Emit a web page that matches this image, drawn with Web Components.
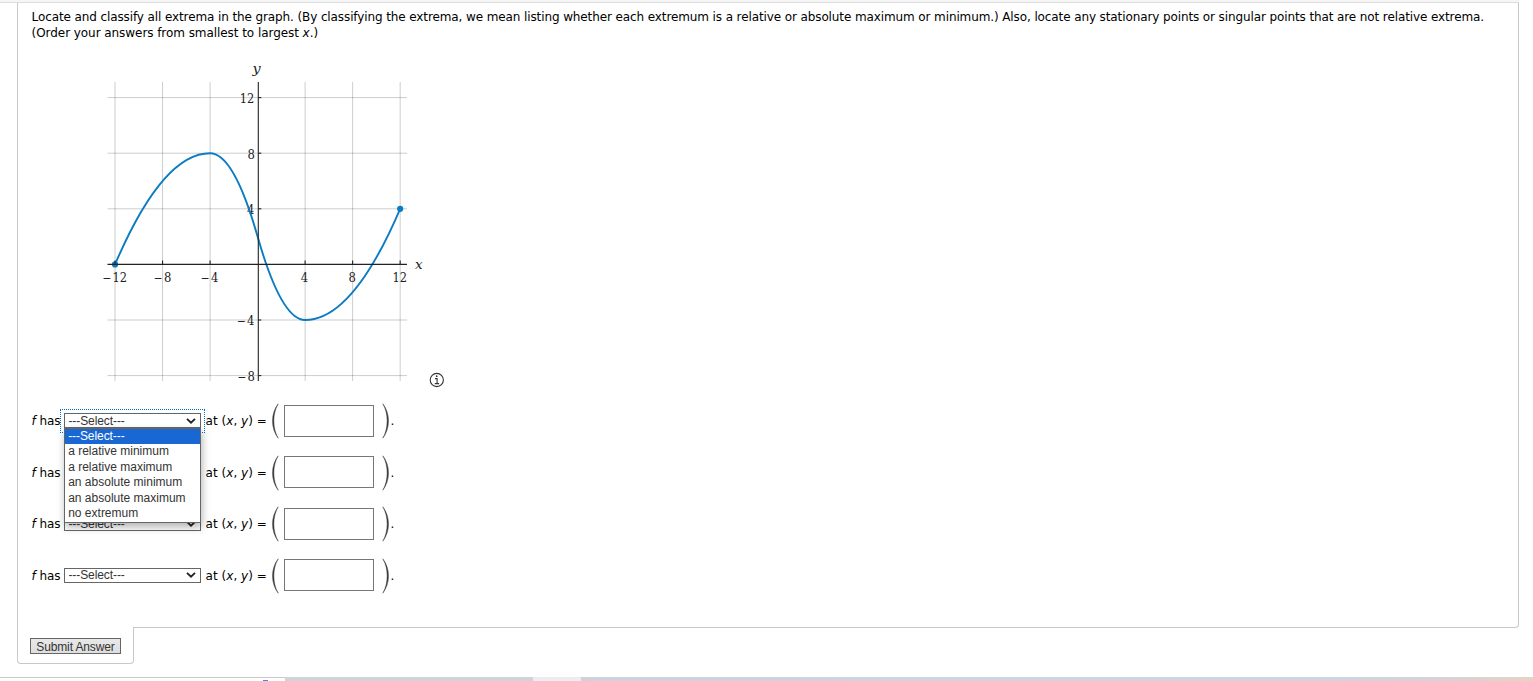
<!DOCTYPE html>
<html lang="en">
<head>
<meta charset="utf-8">
<title>Extrema</title>
<style>
  html, body {
    margin: 0;
    height: 681px;
    overflow: hidden;
    background: #fff;
  }
  body {
    font-family: "DejaVu Sans", Verdana, sans-serif;
    font-size: 12px;
    color: #000;
  }
</style>
</head>
<body>
<question-page></question-page>

<script>
class QuestionPrompt extends HTMLElement {
  constructor() {
    super();
    this.attachShadow({ mode: 'open' }).innerHTML = `
    <style>
      :host { display: block; padding-left: .6px; line-height: 16px; white-space: nowrap; }
      .first { letter-spacing: -.108px; }
      .second { letter-spacing: -.06px; }
    </style>
    <div class="first"><slot name="first"></slot></div>
    <div class="second"><slot name="second"></slot></div>`;
  }
}
customElements.define('question-prompt', QuestionPrompt);

class FunctionGraph extends HTMLElement {
  constructor() {
    super();
    this.attachShadow({ mode: 'open' }).innerHTML = `
    <style>
      :host { display: block; width: 350px; height: 340px; }
      svg { display: block; }
      .grid { stroke: #000; stroke-opacity: .2; stroke-width: 1; }
      .axis { stroke: #222; stroke-width: 1.1; fill: none; }
      text { font-family: "DejaVu Serif", serif; font-size: 12px; fill: #222; }
      .name { font-style: italic; font-size: 12.5px; }
      .curve { fill: none; stroke: #0b7bc2; stroke-width: 1.9; }
    </style>
    <svg width="350" height="340" viewBox="100 55 350 340">${this.draw()}</svg>`;
  }

  px(x) {
    return +(257.6 + x * 11.88).toFixed(2);
  }

  py(y) {
    return +(264.4 - y * 13.9).toFixed(2);
  }

  label(text, right, y, width) {
    return `<text x="${right - width}" y="${y}" textLength="${width}" lengthAdjust="spacingAndGlyphs">${text}</text>`;
  }

  draw() {
    const p = (x, y) => `${this.px(x)} ${this.py(y)}`;
    let out = '';
    [-12, -8, -4, 4, 8, 12].forEach((x) => {
      out += `<path class="grid" d="M${this.px(x)} 82V381"/>`;
    });
    [12, 8, 4, -4, -8].forEach((y) => {
      out += `<path class="grid" d="M107.5 ${this.py(y)}H407"/>`;
    });
    out += this.label('12', 254.3, 102.8, 14.5) + this.label('8', 254.8, 158.6, 7.4);
    out += this.label('4', 254.3, 214.2, 7.4);
    out += this.label('−', 245.8, 325, 9) + this.label('4', 254.3, 325, 7.4);
    out += this.label('−', 246.2, 380.8, 9) + this.label('8', 254.8, 380.8, 7.4);
    out += this.label('−', 111.3, 282, 9) + this.label('12', 127, 282, 14.5);
    out += this.label('−', 162.6, 282, 9) + this.label('8', 171.3, 282, 7.4);
    out += this.label('−', 209.6, 282, 9) + this.label('4', 218.3, 282, 7.4);
    out += this.label('4', 308.2, 282, 7.4);
    out += this.label('8', 355.8, 282, 7.4) + this.label('12', 407, 282, 14.5);
    out += `<text class="name" x="252.4" y="73" textLength="8.2" lengthAdjust="spacingAndGlyphs">y</text>`;
    out += `<text class="name" x="415" y="269" textLength="7.6" lengthAdjust="spacingAndGlyphs">x</text>`;
    out += `<path class="curve" d="M${p(-12, 0)}Q${p(-8, 8)} ${p(-4, 8)}Q${p(-2, 8)} ${p(0, 2)}Q${p(2, -4)} ${p(4, -4)}Q${p(8, -4)} ${p(12, 4)}"/>`;
    out += `<circle cx="${this.px(-12)}" cy="${this.py(0)}" r="3.1" fill="#0b7bc2"/>`;
    out += `<circle cx="${this.px(12)}" cy="${this.py(4)}" r="3.1" fill="#0b7bc2"/>`;
    out += `<path class="axis" d="M107.5 264.4H407M258.3 82V381"/>`;
    [-12, -8, -4, 4, 8, 12].forEach((x) => {
      out += `<path class="axis" d="M${this.px(x)} 260.5V264.4"/>`;
    });
    [12, 8, 4, -4, -8].forEach((y) => {
      out += `<path class="axis" d="M258.3 ${this.py(y)}h3"/>`;
    });
    // info icon
    out += `<g fill="none" stroke="#333"><circle cx="436.8" cy="380" r="6.6" stroke-width="1.1"/>
      <path d="M435 378.6h2.1v5M434.8 383.6h4.3" stroke-width="1.1"/></g>
      <circle cx="436.7" cy="376.2" r=".9" fill="#333"/>`;
    return out;
  }
}
customElements.define('function-graph', FunctionGraph);

class SelectBox extends HTMLElement {
  constructor() {
    super();
    this.attachShadow({ mode: 'open' }).innerHTML = `
    <style>
      :host {
        display: block;
        position: relative;
        width: 137px;
        height: 16px;
        font: 12px/14px "Liberation Sans", Arial, sans-serif;
        letter-spacing: -.08px;
        color: #333;
      }
      .box {
        box-sizing: border-box;
        display: flex;
        justify-content: space-between;
        align-items: center;
        height: 15px;
        padding: 0 4px 0 3.4px;
        border: 1px solid #666;
        background: #fff;
      }
      .focus {
        display: none;
        position: absolute;
        inset: -4px -4px -4px -4px;
        border: 1px dotted #0070c0;
      }
      .list {
        display: none;
        position: absolute;
        z-index: 2;
        top: 15px;
        left: 0;
        width: 135px;
        border: 1px solid #666;
        background: #fff;
        box-shadow: 1px 4px 8px rgba(0, 0, 0, .3);
        color: #333;
      }
      .list div { height: 15.45px; line-height: 15px; padding-left: 3.2px; letter-spacing: 0; }
      .list div:first-child { background: #1967d2; color: #fff; letter-spacing: -.08px; }
      :host([open]) .focus, :host([open]) .list { display: block; }
    </style>
    <div class="box"><span>${this.hasAttribute('empty') ? '' : '---Select---'}</span>
      <svg width="10" height="6" viewBox="0 0 10 6"><path d="M1 .9L5 4.6L9 .9" fill="none" stroke="#222" stroke-width="1.9"/></svg>
    </div>
    <div class="focus"></div>
    <div class="list">${this.createOptions()}</div>`;
  }

  createOptions() {
    if (!this.hasAttribute('open')) {
      return '';
    }
    return ['---Select---', 'a relative minimum', 'a relative maximum', 'an absolute minimum', 'an absolute maximum', 'no extremum']
      .map((option) => `<div>${option}</div>`).join('');
  }
}
customElements.define('select-box', SelectBox);

class AnswerRow extends HTMLElement {
  constructor() {
    super();
    const state = this.hasAttribute('open') ? 'open' : (this.hasAttribute('empty') ? 'empty' : '');
    this.attachShadow({ mode: 'open' }).innerHTML = `
    <style>
      :host {
        display: grid;
        grid-template-columns: 34px 140px 66px 13px 90px 8px 8.5px 8px;
        align-items: center;
        height: 34px;
        line-height: 16px;
        white-space: nowrap;
      }
      .has { padding-left: .6px; letter-spacing: -.1px; }
      select-box { margin-left: -1px; }
      .at { padding-left: .5px; letter-spacing: .04px; }
      .input { box-sizing: border-box; height: 32px; width: 90px; border: 1px solid #767676; margin-top: -1px; }
      svg { display: block; }
      .close { grid-column: 7; }
    </style>
    <span class="has"><i>f</i> has</span>
    <select-box ${state}></select-box>
    <span class="at">at (<i>x</i>, <i>y</i>) =</span>
    <svg width="9" height="36" viewBox="0 0 9 36"><path d="M7.2 .8C-.4 10.5 -.4 25.5 7.2 35.2C1.4 25.5 1.4 10.5 7.2 .8Z" fill="#333" stroke="#444" stroke-width=".5"/></svg>
    <div class="input"></div>
    <svg class="close" width="9" height="36" viewBox="0 0 9 36"><path d="M.8 .8C8.4 10.5 8.4 25.5 .8 35.2C6.6 25.5 6.6 10.5 .8 .8Z" fill="#333" stroke="#444" stroke-width=".5"/></svg>
    <span>.</span>`;
  }
}
customElements.define('answer-row', AnswerRow);

class SubmitButton extends HTMLElement {
  constructor() {
    super();
    this.attachShadow({ mode: 'open' }).innerHTML = `
    <style>
      :host {
        display: block;
        box-sizing: border-box;
        width: 91px;
        height: 16px;
        border: 1px solid #666;
        background: linear-gradient(#e8e8e8, #dedede);
        font: 12px/16px "Liberation Sans", Arial, sans-serif;
        letter-spacing: -.12px;
        color: #333;
        text-align: center;
        white-space: nowrap;
      }
    </style>
    <slot></slot>`;
  }
}
customElements.define('submit-button', SubmitButton);

class QuestionPage extends HTMLElement {
  constructor() {
    super();
    this.attachShadow({ mode: 'open' }).innerHTML = `
    <style>
      :host { display: flex; flex-direction: column; width: 1533px; height: 681px; }
      .top { height: 2px; width: 1519px; background: #f5f5f5; border-bottom: 1px solid #ddd; }
      .panel {
        box-sizing: border-box;
        width: 1502px;
        height: 625px;
        margin-left: 17px;
        border: solid #c8c8c8;
        border-width: 0 1px 1px;
        border-radius: 0 0 4px 0;
        padding: 6px 0 0 13px;
      }
      function-graph { margin: 14px 0 0 69px; }
      .rows { display: flex; flex-direction: column; gap: 17.67px; margin-top: 8px; }
      .tab {
        box-sizing: border-box;
        width: 117px;
        height: 37px;
        margin: -1px 0 0 17px;
        padding: 11px 0 0 12px;
        border: solid #c8c8c8;
        border-width: 0 1px 1px;
        border-radius: 0 0 4px 4px;
        background: #fff;
      }
      .bottom {
        display: flex;
        height: 4px;
        margin-top: 13px;
      }
      .bar { box-sizing: border-box; width: 285px; border-top: 1px solid #c8c8c8; padding: 2px 0 0 263px; }
      .mark { width: 5px; height: 1px; background: #4c83e8; }
      .shelf { width: 248px; background: #d2d3d6; }
      .active { width: 48px; background: #ededef; }
      .rest { flex: 1; background: linear-gradient(90deg, #d1d1db, #d0d4df 75%, #d5d3d8 90%, #e6d3c5); }
    </style>
    <div class="top"></div>
    <div class="panel">
      <question-prompt>
        <span slot="first">Locate and classify all extrema in the graph. (By classifying the extrema, we mean listing whether each extremum is a relative or absolute maximum or minimum.) Also, locate any stationary points or singular points that are not relative extrema.</span>
        <span slot="second">(Order your answers from smallest to largest <i>x</i>.)</span>
      </question-prompt>
      <function-graph></function-graph>
      <div class="rows">
        <answer-row open></answer-row>
        <answer-row empty></answer-row>
        <answer-row></answer-row>
        <answer-row></answer-row>
      </div>
    </div>
    <div class="tab"><submit-button>Submit Answer</submit-button></div>
    <div class="bottom">
      <div class="bar"><div class="mark"></div></div>
      <div class="shelf"></div>
      <div class="active"></div>
      <div class="rest"></div>
    </div>`;
  }
}
customElements.define('question-page', QuestionPage);
</script>
</body>
</html>
